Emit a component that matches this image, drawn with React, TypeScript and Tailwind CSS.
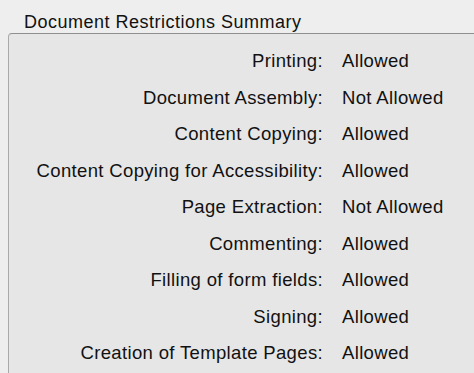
const ROWS: [string, string][] = [
  ["Printing:", "Allowed"],
  ["Document Assembly:", "Not Allowed"],
  ["Content Copying:", "Allowed"],
  ["Content Copying for Accessibility:", "Allowed"],
  ["Page Extraction:", "Not Allowed"],
  ["Commenting:", "Allowed"],
  ["Filling of form fields:", "Allowed"],
  ["Signing:", "Allowed"],
  ["Creation of Template Pages:", "Allowed"],
];

export default function App() {
  return (
    <div className="h-[373px] w-[474px] overflow-hidden bg-[#eeeeee] font-['Liberation_Sans',Arial,sans-serif] text-[#111]">
      <div className="pl-[24px] pt-[11px] text-[18px] leading-[22px] tracking-[0.5px]">
        Document Restrictions Summary
      </div>
      <div className="ml-[8px] h-[400px] rounded-tl-[4px] border-l border-t border-l-[#a9a9a9] border-t-[#8f8f8f] bg-[#e6e6e6] pt-[9px]">
        {ROWS.map(([label, value]) => (
          <div key={label} className="flex h-[36.5px] items-center text-[18.5px] leading-[22px] tracking-[0.35px]">
            <div className="w-[314px] text-right">{label}</div>
            <div className="pl-[19px]">{value}</div>
          </div>
        ))}
      </div>
    </div>
  );
}
